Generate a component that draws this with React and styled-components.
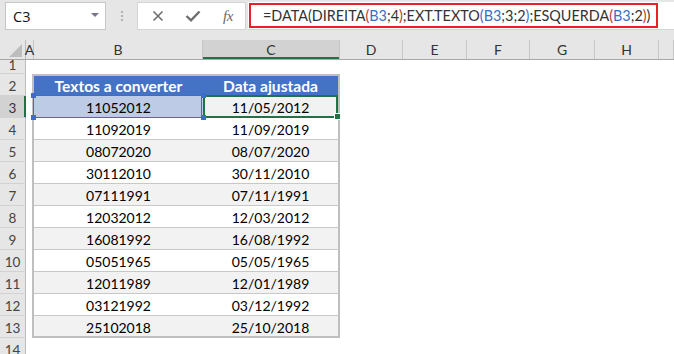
import React from 'react';
import styled, { createGlobalStyle, css } from 'styled-components';

const Global = createGlobalStyle`
  html, body { margin: 0; padding: 0; background: #fff; }
  body { overflow: hidden; }
`;

const COLS = '26px 8px 169px 137px 63px 64px 63px 65px 64px 1fr';
const GREEN = '#217346';
const REFBLUE = '#3b6ecb';

const Screen = styled.div`
  width: 674px;
  height: 354px;
  overflow: hidden;
  background: #fff;
  font-family: Lato, "Liberation Sans", sans-serif;
  display: flex;
  flex-direction: column;
`;

const TopBar = styled.div`
  flex: none;
  height: 39px;
  box-sizing: border-box;
  padding-top: 2px;
  background: #e6e6e6;
  display: flex;
  align-items: flex-start;
`;

const NameBox = styled.div`
  margin-left: 5px;
  width: 101px;
  height: 28px;
  box-sizing: border-box;
  background: #fff;
  border: 1px solid #c6c6c6;
  display: flex;
  align-items: center;
  justify-content: space-between;
  padding: 0 6px 0 7px;
  font-family: "Open Sans", sans-serif;
  font-size: 14.5px;
  color: #111;
`;

const DropArrow = styled.span`
  width: 0;
  height: 0;
  border-left: 4px solid transparent;
  border-right: 4px solid transparent;
  border-top: 4px solid #7d7290;
  margin-bottom: 2px;
`;

const Grip = styled.div`
  width: 31px;
  height: 28px;
  display: flex;
  flex-direction: column;
  align-items: center;
  justify-content: center;
  gap: 2px;
`;

const GripDot = styled.span`
  width: 2px;
  height: 2px;
  background: #b3b3b3;
`;

const FxBox = styled.div`
  width: 109px;
  height: 28px;
  box-sizing: border-box;
  background: #fff;
  border: 1px solid #d4d4d4;
  display: flex;
  align-items: center;
  padding-left: 14px;
`;

const IconSlot = styled.span`
  width: ${(p) => p.$w}px;
  display: flex;
  align-items: center;
  justify-content: center;
  color: #6f6f6f;
`;

const FxText = styled.span`
  font-family: "Liberation Serif", serif;
  font-style: italic;
  font-size: 15px;
  color: #6b6b6b;
  letter-spacing: -0.5px;
`;

const FormulaArea = styled.div`
  flex: 1;
  margin-left: 2px;
  height: 28px;
  background: #fff;
  border-bottom: 1px solid #d4d4d4;
  box-sizing: border-box;
  padding: 1px 0 0 1px;
`;

const RedBox = styled.div`
  width: 409px;
  height: 25px;
  box-sizing: border-box;
  border: 2px solid #e8202a;
  display: flex;
  align-items: center;
  padding-left: 12px;
  font-family: Lato, "Liberation Sans", sans-serif;
  font-size: 14.4px;
  color: #333;
  white-space: nowrap;
  overflow: hidden;
`;

const Tok = styled.span`
  color: ${(p) => p.$c || '#333'};
`;

const Sheet = styled.div`
  flex: 1;
  display: flex;
  flex-direction: column;
`;

const ColHeaderRow = styled.div`
  display: grid;
  grid-template-columns: ${COLS};
  height: 21px;
  box-sizing: border-box;
  background: #e6e6e6;
  border-bottom: 1px solid #a8a8a8;
`;

const ColHead = styled.div`
  display: flex;
  align-items: center;
  justify-content: center;
  font-size: 14px;
  color: #333;
  border-right: 1px solid #c6c6c6;
  margin-top: 1px;
  ${(p) =>
    p.$sel &&
    css`
      background: #d2d2d2;
      box-shadow: inset 0 -2px 0 ${GREEN};
    `}
  ${(p) =>
    p.$corner &&
    css`
      border-right-color: #bcbcbc;
      justify-content: flex-end;
      align-items: flex-end;
      padding: 0 3px 2px 0;
    `}
`;

const Row = styled.div`
  display: grid;
  grid-template-columns: ${COLS};
  height: ${(p) => p.$h}px;
  flex: none;
`;

const RowHead = styled.div`
  background: #e6e6e6;
  border-right: 1px solid #bcbcbc;
  border-bottom: 1px solid #d2d2d2;
  box-sizing: border-box;
  display: flex;
  align-items: center;
  justify-content: center;
  padding-top: 2px;
  font-size: 13.5px;
  color: #444;
  ${(p) =>
    p.$top &&
    css`
      align-items: flex-start;
      padding-top: 0;
      line-height: 10px;
    `}
  ${(p) =>
    p.$sel &&
    css`
      background: #d2d2d2;
      border-right-color: ${GREEN};
      box-shadow: inset -1px 0 0 ${GREEN};
      color: #333;
    `}
`;

const Blank = styled.div`
  ${(p) =>
    p.$edge &&
    css`
      border-right: 2px solid #bfbfbf;
    `}
`;

const Cell = styled.div`
  position: relative;
  box-sizing: border-box;
  display: flex;
  align-items: center;
  justify-content: center;
  padding-top: 2px;
  font-size: 14px;
  color: #000;
  background: ${(p) => (p.$head ? '#4472c4' : p.$shade ? '#f2f2f2' : '#fff')};
  border-bottom: 1px solid #c8c8c8;
  ${(p) =>
    p.$head &&
    css`
      border-top: 2px solid #bfbfbf;
      border-bottom: none;
      color: #fff;
      font-weight: 700;
      font-size: 15.6px;
      padding-top: 0;
    `}
  ${(p) =>
    p.$last &&
    css`
      border-bottom: 2px solid #bfbfbf;
    `}
  ${(p) =>
    p.$right &&
    css`
      border-right: 2px solid #bfbfbf;
    `}
  ${(p) =>
    p.$ref &&
    css`
      background: #bdcbe6;
    `}
  ${(p) =>
    p.$active &&
    css`
      &::after {
        content: '';
        position: absolute;
        top: -1px;
        left: 0;
        right: 0;
        bottom: -1px;
        border: 2px solid ${GREEN};
        pointer-events: none;
      }
    `}
`;

const RefFrame = styled.span`
  position: absolute;
  top: -1px;
  left: -1px;
  right: 1px;
  bottom: -1px;
  border: 1px solid ${REFBLUE};
  pointer-events: none;
`;

const Handle = styled.span`
  position: absolute;
  width: 5px;
  height: 5px;
  background: ${(p) => p.$color};
  ${(p) => (p.$v === 't' ? 'top: -3px;' : 'bottom: -3px;')}
  ${(p) => (p.$h === 'l' ? 'left: -3px;' : 'right: -3px;')}
  z-index: 2;
`;

const FillHandle = styled.span`
  position: absolute;
  width: 5px;
  height: 5px;
  right: -3px;
  bottom: -3px;
  background: ${GREEN};
  border: 1px solid #fff;
  z-index: 3;
`;

const data = [
  ['11052012', '11/05/2012'],
  ['11092019', '11/09/2019'],
  ['08072020', '08/07/2020'],
  ['30112010', '30/11/2010'],
  ['07111991', '07/11/1991'],
  ['12032012', '12/03/2012'],
  ['16081992', '16/08/1992'],
  ['05051965', '05/05/1965'],
  ['12011989', '12/01/1989'],
  ['03121992', '03/12/1992'],
  ['25102018', '25/10/2018'],
];

const TAIL = ['D', 'E', 'F', 'G', 'H', 'I'];

function TailBlanks() {
  return TAIL.map((c) => <Blank key={c} />);
}

function Corner() {
  return (
    <svg width="13" height="13" viewBox="0 0 13 13">
      <polygon points="13,0 13,13 0,13" fill="#bdbdbd" />
    </svg>
  );
}

function CancelIcon() {
  return (
    <svg width="12" height="12" viewBox="0 0 12 12">
      <path d="M1.5 1.5 L10.5 10.5 M10.5 1.5 L1.5 10.5" stroke="#6e6e6e" strokeWidth="1.6" fill="none" />
    </svg>
  );
}

function CheckIcon() {
  return (
    <svg width="16" height="12" viewBox="0 0 16 12">
      <path d="M1.5 6 L6 10.3 L14.5 1.5" stroke="#6e6e6e" strokeWidth="2.4" fill="none" strokeLinejoin="miter" />
    </svg>
  );
}

export default function App() {
  const blue = '#3b6fc6';
  const red = '#c0392b';
  return (
    <Screen>
      <Global />
      <TopBar>
        <NameBox>
          <span>C3</span>
          <DropArrow />
        </NameBox>
        <Grip>
          <GripDot />
          <GripDot />
          <GripDot />
        </Grip>
        <FxBox>
          <IconSlot $w={12}><CancelIcon /></IconSlot>
          <IconSlot $w={21} />
          <IconSlot $w={16}><CheckIcon /></IconSlot>
          <IconSlot $w={21} />
          <IconSlot $w={12}><FxText>fx</FxText></IconSlot>
        </FxBox>
        <FormulaArea>
          <RedBox>
            <Tok>=DATA(DIREITA</Tok>
            <Tok $c={red}>(</Tok>
            <Tok $c={blue}>B3</Tok>
            <Tok>;4</Tok>
            <Tok $c={red}>)</Tok>
            <Tok>;EXT.TEXTO</Tok>
            <Tok $c={blue}>(</Tok>
            <Tok $c={blue}>B3</Tok>
            <Tok>;3;2</Tok>
            <Tok $c={blue}>)</Tok>
            <Tok>;ESQUERDA</Tok>
            <Tok $c={red}>(</Tok>
            <Tok $c={blue}>B3</Tok>
            <Tok>;2</Tok>
            <Tok $c={red}>)</Tok>
            <Tok>)</Tok>
          </RedBox>
        </FormulaArea>
      </TopBar>

      <Sheet>
        <ColHeaderRow>
          <ColHead $corner><Corner /></ColHead>
          <ColHead>A</ColHead>
          <ColHead>B</ColHead>
          <ColHead $sel>C</ColHead>
          <ColHead>D</ColHead>
          <ColHead>E</ColHead>
          <ColHead>F</ColHead>
          <ColHead>G</ColHead>
          <ColHead>H</ColHead>
          <ColHead />
        </ColHeaderRow>

        <Row $h={14}>
          <RowHead $top>1</RowHead>
          <Blank />
          <Blank />
          <Blank />
          <TailBlanks />
        </Row>

        <Row $h={22}>
          <RowHead>2</RowHead>
          <Blank $edge />
          <Cell $head>Textos a converter</Cell>
          <Cell $head $right>Data ajustada</Cell>
          <TailBlanks />
        </Row>

        {data.map(([raw, date], i) => {
          const n = i + 3;
          const shade = n % 2 === 1;
          const last = i === data.length - 1;
          const first = i === 0;
          return (
            <Row $h={22} key={n}>
              <RowHead $sel={first}>{n}</RowHead>
              <Blank $edge />
              <Cell $shade={shade} $last={last} $ref={first}>
                {raw}
                {first && (
                  <>
                    <RefFrame />
                    <Handle $color={REFBLUE} $v="t" $h="l" />
                    <Handle $color={REFBLUE} $v="t" $h="r" />
                    <Handle $color={REFBLUE} $v="b" $h="l" />
                    <Handle $color={REFBLUE} $v="b" $h="r" />
                  </>
                )}
              </Cell>
              <Cell $shade={shade} $last={last} $right $active={first}>
                {date}
                {first && <FillHandle />}
              </Cell>
              <TailBlanks />
            </Row>
          );
        })}

        <Row $h={22}>
          <RowHead>14</RowHead>
          <Blank />
          <Blank />
          <Blank />
          <TailBlanks />
        </Row>
      </Sheet>
    </Screen>
  );
}
